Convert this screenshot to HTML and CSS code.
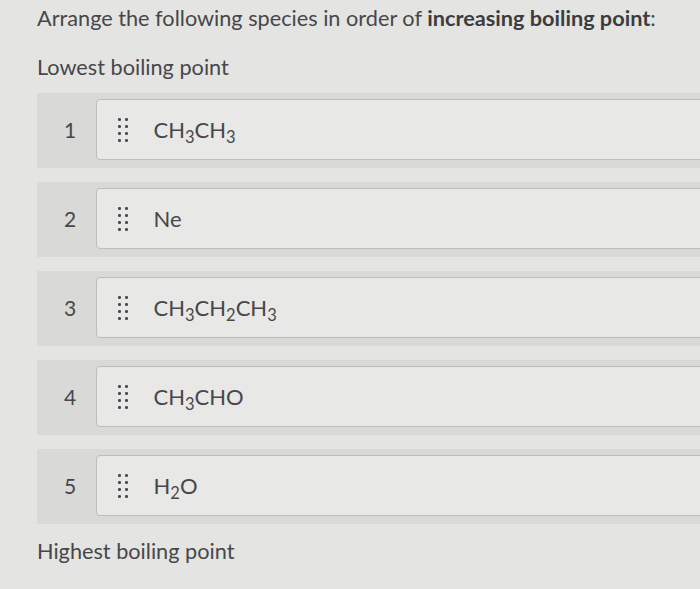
FILE: index.html
```html
<!DOCTYPE html>
<html lang="en">
<head>
<meta charset="utf-8">
<title>Ordering question</title>
<link rel="stylesheet" href="styles.css">
</head>
<body>
<main class="question">
  <p class="prompt">Arrange the following species in order of <strong>increasing boiling point</strong>:</p>
  <p class="label label-top">Lowest boiling point</p>
  <ol class="order-list">
    <li class="order-row">
      <span class="num">1</span>
      <div class="item"><span class="grip"><i></i><i></i><i></i><i></i><i></i><i></i><i></i><i></i></span><span class="formula">CH<sub>3</sub>CH<sub>3</sub></span></div>
    </li>
    <li class="order-row">
      <span class="num">2</span>
      <div class="item"><span class="grip"><i></i><i></i><i></i><i></i><i></i><i></i><i></i><i></i></span><span class="formula">Ne</span></div>
    </li>
    <li class="order-row">
      <span class="num">3</span>
      <div class="item"><span class="grip"><i></i><i></i><i></i><i></i><i></i><i></i><i></i><i></i></span><span class="formula">CH<sub>3</sub>CH<sub>2</sub>CH<sub>3</sub></span></div>
    </li>
    <li class="order-row">
      <span class="num">4</span>
      <div class="item"><span class="grip"><i></i><i></i><i></i><i></i><i></i><i></i><i></i><i></i></span><span class="formula">CH<sub>3</sub>CHO</span></div>
    </li>
    <li class="order-row">
      <span class="num">5</span>
      <div class="item"><span class="grip"><i></i><i></i><i></i><i></i><i></i><i></i><i></i><i></i></span><span class="formula">H<sub>2</sub>O</span></div>
    </li>
  </ol>
  <p class="label label-bottom">Highest boiling point</p>
</main>
</body>
</html>
```

FILE: styles.css
```css
html, body {
  margin: 0;
  padding: 0;
}
body {
  width: 700px;
  height: 589px;
  overflow: hidden;
  background: #e4e4e2;
  color: #47474a;
  font-family: Lato, "Open Sans", "Liberation Sans", sans-serif;
  font-size: 21.7px;
  line-height: 26px;
}
.question {
  padding: 5px 0 0 37px;
}
.prompt {
  margin: 0;
}
.prompt strong {
  font-weight: 700;
  color: #3c3c3f;
}
.label {
  margin: 0;
}
.label-top {
  margin-top: 23px;
}
.label-bottom {
  margin-top: 14px;
}
.order-list {
  list-style: none;
  margin: 13px 0 0;
  padding: 0;
  display: flex;
  flex-direction: column;
  gap: 14px;
}
.order-row {
  display: flex;
  align-items: flex-start;
  height: 75px;
  width: 680px;
  background: #d9d9d7;
  box-sizing: border-box;
  padding-top: 6px;
}
.num {
  width: 59px;
  flex: none;
  box-sizing: border-box;
  padding-left: 7px;
  text-align: center;
  line-height: 61px;
  font-size: 21px;
}
.item {
  flex: 1;
  height: 61px;
  box-sizing: border-box;
  border: 1px solid #bdbdbb;
  border-radius: 4px;
  background: #e8e8e6;
  display: flex;
  align-items: center;
}
.grip {
  display: grid;
  grid-template-columns: 2.5px 2.5px;
  grid-auto-rows: 2.5px;
  column-gap: 4.5px;
  row-gap: 4.5px;
  margin-left: 21px;
  margin-right: 26px;
  margin-top: 1px;
}
.grip i {
  display: block;
  width: 2.5px;
  height: 2.5px;
  border-radius: 50%;
  background: #4a4a4d;
}
.formula {
  color: #47474a;
  font-size: 22px;
}
.formula sub {
  font-size: 16.5px;
  line-height: 0;
  vertical-align: -5px;
}
```
